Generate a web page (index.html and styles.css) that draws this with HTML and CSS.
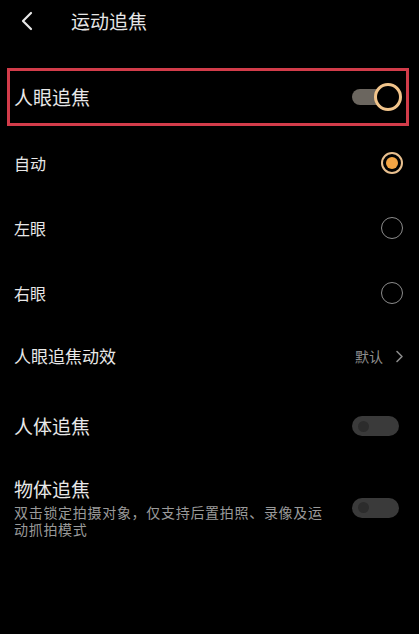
FILE: index.html
```html
<!DOCTYPE html>
<html lang="zh-CN">
<head>
<meta charset="utf-8">
<link rel="stylesheet" href="styles.css">
</head>
<body>
<div class="page">
  <header class="header">
    <svg class="back" width="14" height="20" viewBox="0 0 14 20"><path d="M11 2 L3 10 L11 18" fill="none" stroke="#e8e8e8" stroke-width="2.2" stroke-linecap="round" stroke-linejoin="round"/></svg>
    <div class="title">运动追焦</div>
  </header>

  <div class="highlight">
    <div class="row-main">人眼追焦</div>
    <div class="toggle-on"><span class="track"></span><span class="knob"></span></div>
  </div>

  <div class="radio-row">
    <div class="label">自动</div>
    <span class="radio selected"></span>
  </div>
  <div class="radio-row">
    <div class="label">左眼</div>
    <span class="radio"></span>
  </div>
  <div class="radio-row">
    <div class="label">右眼</div>
    <span class="radio"></span>
  </div>

  <div class="link-row">
    <div class="label-md">人眼追焦动效</div>
    <div class="value">默认
      <svg class="chev" width="9" height="13" viewBox="0 0 9 13"><path d="M2 1.5 L7 6.5 L2 11.5" fill="none" stroke="#8a8a8a" stroke-width="1.6" stroke-linecap="round" stroke-linejoin="round"/></svg>
    </div>
  </div>

  <div class="switch-row">
    <div class="row-main">人体追焦</div>
    <span class="toggle-off"><span class="dot"></span></span>
  </div>

  <div class="switch-row tall">
    <div class="text-block">
      <div class="row-main">物体追焦</div>
      <div class="sub">双击锁定拍摄对象，仅支持后置拍照、录像及运动抓拍模式</div>
    </div>
    <span class="toggle-off"><span class="dot"></span></span>
  </div>
</div>
</body>
</html>
```

FILE: styles.css
```css
html, body {
  margin: 0;
  padding: 0;
  background: #000;
}
body {
  width: 419px;
  height: 634px;
  overflow: hidden;
  font-family: "Noto Sans CJK SC", "Noto Sans", sans-serif;
  color: #e8e8e8;
}
.page {
  display: flex;
  flex-direction: column;
}
.header {
  height: 42px;
  display: flex;
  align-items: center;
  padding-left: 20px;
}
.back {
  display: block;
  margin-top: 0;
}
.title {
  margin-left: 37px;
  font-size: 19px;
  line-height: 24px;
  color: #e6e6e6;
}
.highlight {
  margin: 26px 10px 0 7px;
  height: 52px;
  border: 3px solid #d23c4a;
  display: flex;
  align-items: center;
  justify-content: space-between;
  padding: 0 4px 0 4px;
}
.row-main {
  font-size: 19px;
  line-height: 24px;
  color: #e8e8e8;
}
.toggle-on {
  position: relative;
  width: 50px;
  height: 28px;
}
.toggle-on .track {
  position: absolute;
  left: 0;
  top: 6px;
  width: 40px;
  height: 16px;
  border-radius: 8px;
  background: #6b665f;
}
.toggle-on .knob {
  position: absolute;
  right: 0;
  top: 0;
  width: 22px;
  height: 22px;
  border: 3px solid #f1c48b;
  border-radius: 50%;
  background: #000;
}
.radio-row {
  height: 65px;
  display: flex;
  align-items: center;
  justify-content: space-between;
  padding: 0 16px 0 14px;
}
.radio-row:first-of-type {
  margin-top: 0;
}
.highlight + .radio-row {
  margin-top: 4px;
}
.label {
  font-size: 16px;
  line-height: 20px;
}
.radio {
  box-sizing: border-box;
  width: 22px;
  height: 22px;
  border-radius: 50%;
  border: 1.5px solid #8c8c8c;
  display: flex;
  align-items: center;
  justify-content: center;
}
.radio.selected {
  border: 2px solid #e9c08f;
}
.radio.selected::after {
  content: "";
  width: 12px;
  height: 12px;
  border-radius: 50%;
  background: #f4a544;
}
.link-row {
  height: 62px;
  display: flex;
  align-items: center;
  justify-content: space-between;
  padding: 0 15px 0 14px;
}
.label-md {
  font-size: 17px;
  line-height: 22px;
}
.value {
  display: flex;
  align-items: center;
  font-size: 14px;
  color: #8e8e8e;
}
.chev {
  margin-left: 12px;
}
.switch-row {
  height: 78px;
  display: flex;
  align-items: center;
  justify-content: space-between;
  padding: 0 20px 0 14px;
}
.switch-row.tall {
  height: auto;
  padding-top: 12px;
  align-items: center;
}
.text-block {
  display: flex;
  flex-direction: column;
}
.sub {
  margin-top: 3px;
  width: 316px;
  font-size: 14px;
  letter-spacing: 0.7px;
  line-height: 17px;
  color: #9a9a9a;
}
.toggle-off {
  width: 47px;
  height: 20px;
  border-radius: 10px;
  background: #3a3a3a;
  display: flex;
  align-items: center;
  padding-left: 6px;
  box-sizing: border-box;
}
.toggle-off .dot {
  width: 11px;
  height: 11px;
  border-radius: 50%;
  background: #2c2c2c;
}
```
